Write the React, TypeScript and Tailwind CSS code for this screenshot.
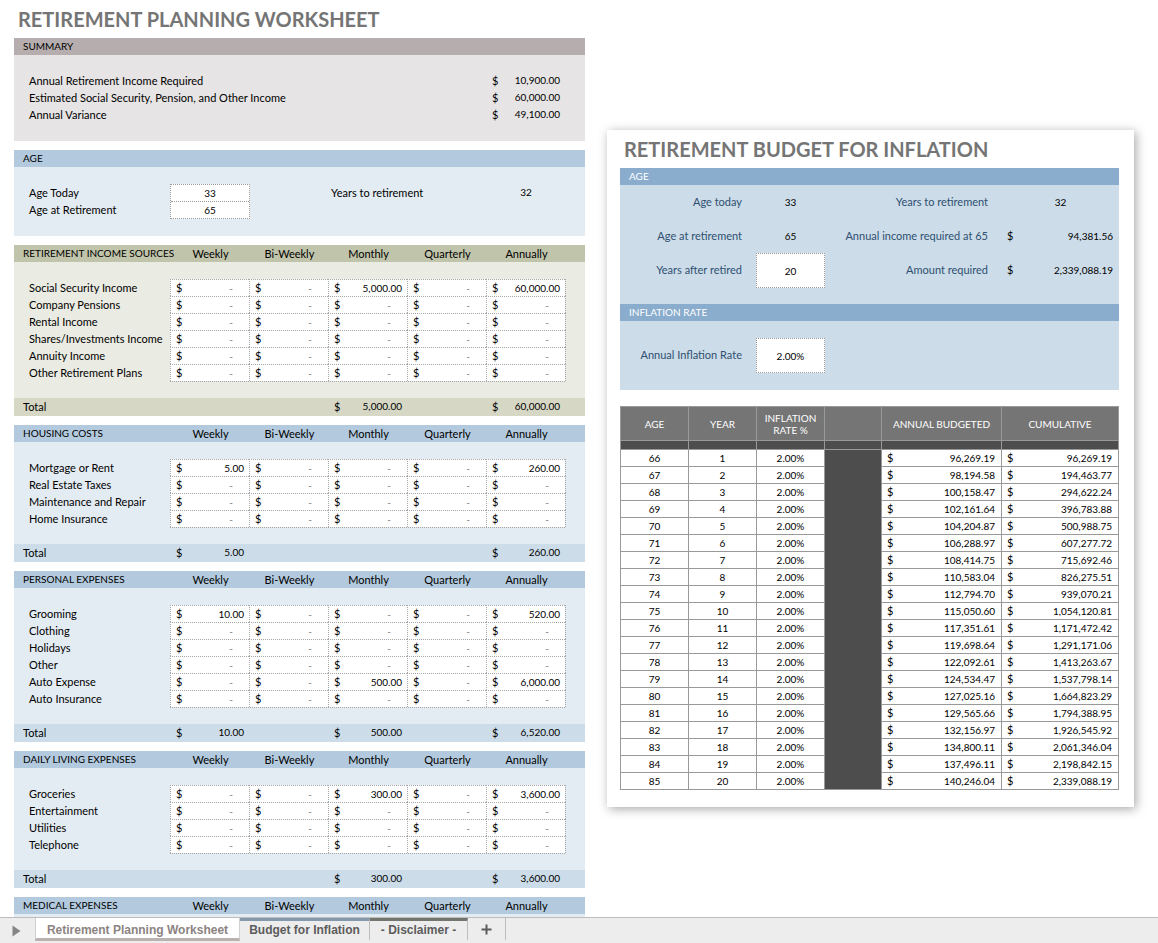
import React from 'react';
import clsx from 'clsx';

type Amount = string | null;

interface BudgetRow {
  label: string;
  values: Amount[];
}

interface BudgetSection {
  title: string;
  tone: 'green' | 'blue';
  rows: BudgetRow[];
  totals?: Amount[];
}

const PERIODS = ['Weekly', 'Bi-Weekly', 'Monthly', 'Quarterly', 'Annually'];
const EMPTY: Amount[] = ['-', '-', '-', '-', '-'];

const blank = (label: string): BudgetRow => ({ label, values: EMPTY });

const SUMMARY = [
  { label: 'Annual Retirement Income Required', value: '10,900.00' },
  { label: 'Estimated Social Security, Pension, and Other Income', value: '60,000.00' },
  { label: 'Annual Variance', value: '49,100.00' },
];

const SECTIONS: BudgetSection[] = [
  {
    title: 'RETIREMENT INCOME SOURCES',
    tone: 'green',
    rows: [
      { label: 'Social Security Income', values: ['-', '-', '5,000.00', '-', '60,000.00'] },
      blank('Company Pensions'),
      blank('Rental Income'),
      blank('Shares/Investments Income'),
      blank('Annuity Income'),
      blank('Other Retirement Plans'),
    ],
    totals: [null, null, '5,000.00', null, '60,000.00'],
  },
  {
    title: 'HOUSING COSTS',
    tone: 'blue',
    rows: [
      { label: 'Mortgage or Rent', values: ['5.00', '-', '-', '-', '260.00'] },
      blank('Real Estate Taxes'),
      blank('Maintenance and Repair'),
      blank('Home Insurance'),
    ],
    totals: ['5.00', null, null, null, '260.00'],
  },
  {
    title: 'PERSONAL EXPENSES',
    tone: 'blue',
    rows: [
      { label: 'Grooming', values: ['10.00', '-', '-', '-', '520.00'] },
      blank('Clothing'),
      blank('Holidays'),
      blank('Other'),
      { label: 'Auto Expense', values: ['-', '-', '500.00', '-', '6,000.00'] },
      blank('Auto Insurance'),
    ],
    totals: ['10.00', null, '500.00', null, '6,520.00'],
  },
  {
    title: 'DAILY LIVING EXPENSES',
    tone: 'blue',
    rows: [
      { label: 'Groceries', values: ['-', '-', '300.00', '-', '3,600.00'] },
      blank('Entertainment'),
      blank('Utilities'),
      blank('Telephone'),
    ],
    totals: [null, null, '300.00', null, '3,600.00'],
  },
  { title: 'MEDICAL EXPENSES', tone: 'blue', rows: [] },
];

// [annual budgeted, cumulative], starting at age 66
const PROJECTION = [
  ['96,269.19', '96,269.19'],
  ['98,194.58', '194,463.77'],
  ['100,158.47', '294,622.24'],
  ['102,161.64', '396,783.88'],
  ['104,204.87', '500,988.75'],
  ['106,288.97', '607,277.72'],
  ['108,414.75', '715,692.46'],
  ['110,583.04', '826,275.51'],
  ['112,794.70', '939,070.21'],
  ['115,050.60', '1,054,120.81'],
  ['117,351.61', '1,171,472.42'],
  ['119,698.64', '1,291,171.06'],
  ['122,092.61', '1,413,263.67'],
  ['124,534.47', '1,537,798.14'],
  ['127,025.16', '1,664,823.29'],
  ['129,565.66', '1,794,388.95'],
  ['132,156.97', '1,926,545.92'],
  ['134,800.11', '2,061,346.04'],
  ['137,496.11', '2,198,842.15'],
  ['140,246.04', '2,339,088.19'],
];

const TONES = {
  green: { head: 'bg-[#c0c4aa]', body: 'bg-[#eaebe2]', total: 'bg-[#d6d7c5]' },
  blue: { head: 'bg-[#b3cade]', body: 'bg-[#e4ecf3]', total: 'bg-[#ccdce9]' },
};

const Money: React.FC<{ value: string }> = ({ value }) => (
  <div className="flex justify-between px-[5px]">
    <span>$</span>
    <span className={clsx('text-[10px]', value === '-' && 'pr-[11px] text-[#777]')}>{value}</span>
  </div>
);

const SectionTable: React.FC<{ section: BudgetSection }> = ({ section }) => {
  const tone = TONES[section.tone];

  return (
    <table className={clsx('w-full table-fixed border-separate border-spacing-0', tone.body)}>
      <colgroup>
        <col />
        {PERIODS.map((period) => (
          <col key={period} className="w-[79px]" />
        ))}
        <col className="w-5" />
      </colgroup>
      <thead className={tone.head}>
        <tr className="h-[17px]">
          <th className="p-0 pl-[9px] text-left text-[10px] font-normal whitespace-nowrap">{section.title}</th>
          {PERIODS.map((period) => (
            <th key={period} className="p-0 pl-[2px] text-center font-normal">{period}</th>
          ))}
          <td className="p-0" />
        </tr>
      </thead>
      <tbody>
        {section.rows.length === 0 && (
          <tr className="h-[3px]">
            <td colSpan={7} className="p-0" />
          </tr>
        )}
        {section.rows.length > 0 && (
          <tr className="h-[17px]">
            <td colSpan={7} className="p-0" />
          </tr>
        )}
        {section.rows.map((row) => (
          <tr key={row.label} className="h-[17px]">
            <th className="p-0 pl-[15px] text-left font-normal whitespace-nowrap">{row.label}</th>
            {row.values.map((value, i) => (
              <td key={PERIODS[i]} className="border-t border-l border-dotted border-[#a6a6a6] bg-white p-0 leading-4">
                <Money value={value ?? ''} />
              </td>
            ))}
            <td className="border-l border-dotted border-[#a6a6a6] p-0" />
          </tr>
        ))}
        {section.rows.length > 0 && (
          <tr className="h-[17px]">
            <td className="p-0" />
            <td colSpan={5} className="border-t border-dotted border-[#a6a6a6] p-0" />
            <td className="p-0" />
          </tr>
        )}
      </tbody>
      {section.totals && (
        <tfoot className={tone.total}>
          <tr className="h-[18px] align-top">
            <th className="p-0 pl-[9px] text-left font-normal">Total</th>
            {section.totals.map((value, i) => (
              <td key={PERIODS[i]} className="p-0 pl-px">{value && <Money value={value} />}</td>
            ))}
            <td className="p-0" />
          </tr>
        </tfoot>
      )}
    </table>
  );
};

const Worksheet: React.FC = () => (
  <section className="min-w-0">
    <h1 className="h-[38px] pl-1 text-xl leading-[38px] font-bold whitespace-nowrap text-[#757575]">
      RETIREMENT PLANNING WORKSHEET
    </h1>
    <div className="flex flex-col gap-[9px]">
      <div className="bg-[#e6e4e4]">
        <h2 className="bg-[#b6aeae] pl-[9px] text-[10px]">SUMMARY</h2>
        <dl className="pt-[17px] pr-[25px] pb-[18px] pl-[15px]">
          {SUMMARY.map((item) => (
            <div key={item.label} className="flex justify-between">
              <dt>{item.label}</dt>
              <dd className="flex w-[68px] justify-between">
                <span>$</span>
                <span className="text-[10px]">{item.value}</span>
              </dd>
            </div>
          ))}
        </dl>
      </div>

      <div className="bg-[#e4ecf3]">
        <h2 className="bg-[#b3cade] pl-[9px] text-[10px]">AGE</h2>
        <div className="flex pt-[17px] pb-[17px]">
          <div className="flex flex-1 flex-col pl-[15px] leading-[17px]">
            <label htmlFor="age-today">Age Today</label>
            <label htmlFor="age-retire">Age at Retirement</label>
          </div>
          <div className="flex w-20 flex-col border border-dotted border-[#999] bg-white text-[10px]">
            <input id="age-today" className="h-[17px] w-full border-b border-dotted border-[#999] text-center" defaultValue="33" />
            <input id="age-retire" className="h-4 w-full text-center" defaultValue="65" />
          </div>
          <div className="w-[237px] pl-[81px]">Years to retirement</div>
          <div className="w-[98px] pr-5 text-center text-[10px]">32</div>
        </div>
      </div>

      {SECTIONS.map((section) => (
        <SectionTable key={section.title} section={section} />
      ))}
    </div>
  </section>
);

const InflationBudget: React.FC = () => (
  <section className="mt-[130px] min-w-0 self-start bg-white pr-[15px] pb-[17px] pl-[13px] shadow-[2px_2px_10px_rgba(0,0,0,0.35)]">
    <h1 className="h-[38px] pl-1 text-xl leading-[38px] font-bold whitespace-nowrap text-[#757575]">
      RETIREMENT BUDGET FOR INFLATION
    </h1>
    <h2 className="bg-[#8aaccd] pl-[9px] text-[10px] text-white">AGE</h2>
    <div className="grid grid-cols-[136px_69px_1fr_117px] bg-[#ccdce9] pb-4 leading-[34px]">
      <span className="pr-[14px] text-right text-[#2f5070]">Age today</span>
      <span className="text-center text-[10px]">33</span>
      <span className="pr-[14px] text-right text-[#2f5070]">Years to retirement</span>
      <span className="text-center text-[10px]">32</span>

      <span className="pr-[14px] text-right text-[#2f5070]">Age at retirement</span>
      <span className="text-center text-[10px]">65</span>
      <span className="pr-[14px] text-right text-[#2f5070]">Annual income required at 65</span>
      <span className="flex justify-between pr-[6px] pl-[5px]">
        <span>$</span>
        <span className="text-[10px]">94,381.56</span>
      </span>

      <label htmlFor="years-after" className="pr-[14px] text-right text-[#2f5070]">Years after retired</label>
      <input id="years-after" className="h-[35px] w-full border border-dotted border-[#999] bg-white text-center text-[10px]" defaultValue="20" />
      <span className="pr-[14px] text-right text-[#2f5070]">Amount required</span>
      <span className="flex justify-between pr-[6px] pl-[5px]">
        <span>$</span>
        <span className="text-[10px]">2,339,088.19</span>
      </span>
    </div>

    <h2 className="bg-[#8aaccd] pl-[9px] text-[10px] text-white">INFLATION RATE</h2>
    <div className="grid grid-cols-[136px_69px_1fr] bg-[#ccdce9] py-[17px] leading-[34px]">
      <label htmlFor="rate" className="pr-[14px] text-right text-[#2f5070]">Annual Inflation Rate</label>
      <input id="rate" className="h-[35px] w-full border border-dotted border-[#999] bg-white text-center text-[10px]" defaultValue="2.00%" />
    </div>

    <table className="mt-4 w-full table-fixed border-separate border-spacing-0 border-r border-b border-[#999]">
      <colgroup>
        <col className="w-[68px]" />
        <col className="w-[68px]" />
        <col className="w-[68px]" />
        <col className="w-[57px]" />
        <col className="w-[120px]" />
        <col />
      </colgroup>
      <thead>
        <tr className="h-[34px] bg-[#757575] text-[10px] text-white">
          {['AGE', 'YEAR', 'INFLATION RATE %', '', 'ANNUAL BUDGETED', 'CUMULATIVE'].map((title) => (
            <th key={title} className="border-t border-l border-[#999] p-0 leading-3 font-normal">{title}</th>
          ))}
        </tr>
        <tr className="h-[9px] bg-[#4d4d4d]">
          {[0, 1, 2, 3, 4, 5].map((i) => (
            <td key={i} className="border-t border-l border-[#999] p-0" />
          ))}
        </tr>
      </thead>
      <tbody>
        {PROJECTION.map(([budgeted, cumulative], i) => (
          <tr key={i} className="h-[17px] text-center leading-4">
            <td className="border-t border-l border-[#999] p-0 text-[10px]">{66 + i}</td>
            <td className="border-t border-l border-[#999] p-0 text-[10px]">{i + 1}</td>
            <td className="border-t border-l border-[#999] p-0 text-[10px]">2.00%</td>
            <td className={clsx('border-l border-[#999] bg-[#4d4d4d] p-0', i === 0 && 'border-t')} />
            <td className="border-t border-l border-[#999] p-0 pr-px">
              <Money value={budgeted} />
            </td>
            <td className="border-t border-l border-[#999] p-0 pr-px">
              <Money value={cumulative} />
            </td>
          </tr>
        ))}
      </tbody>
    </table>
  </section>
);

const SheetTabs: React.FC = () => (
  <nav className="flex h-[26px] items-start border-t border-[#bdbdbd] bg-[#ededed] font-['Liberation_Sans',sans-serif] text-xs font-bold text-[#5c5c5c]">
    <button type="button" aria-label="Next sheet" className="flex h-[25px] w-[35px] items-center pl-3">
      <svg width="9" height="12" viewBox="0 0 9 12" className="fill-[#858585]">
        <path d="M0.5 0.5 L8.5 6 L0.5 11.5 Z" />
      </svg>
    </button>
    <button type="button" className="h-[23px] w-[205px] border-x border-b-3 border-[#bab2b1] border-x-[#d0d0d0] bg-white pt-[3px] leading-4 whitespace-nowrap text-[#8c8382]">
      Retirement Planning Worksheet
    </button>
    <button type="button" className="h-[22px] w-[130px] border-t-3 border-r border-t-[#8499ab] border-r-[#bdbdbd] pb-[2px] leading-4 whitespace-nowrap">
      Budget for Inflation
    </button>
    <button type="button" className="h-[22px] w-[98px] border-t-3 border-r border-t-[#73766e] border-r-[#bdbdbd] pb-[2px] leading-4 whitespace-nowrap">
      - Disclaimer -
    </button>
    <button type="button" aria-label="Add sheet" className="flex h-[22px] w-[38px] items-center justify-center border-r border-[#bdbdbd]">
      <svg width="11" height="11" viewBox="0 0 11 11" className="fill-[#5c5c5c]">
        <path d="M4.5 0.5h2v4h4v2h-4v4h-2v-4h-4v-2h4z" />
      </svg>
    </button>
  </nav>
);

export default function App() {
  return (
    <div className="flex min-h-screen flex-col bg-white font-['Century_Gothic',Lato,sans-serif] text-[11px] leading-[17px] text-black">
      <main className="grid flex-1 grid-cols-[571fr_527fr] gap-x-[22px] pr-6 pl-[14px]">
        <Worksheet />
        <InflationBudget />
      </main>
      <SheetTabs />
    </div>
  );
}
